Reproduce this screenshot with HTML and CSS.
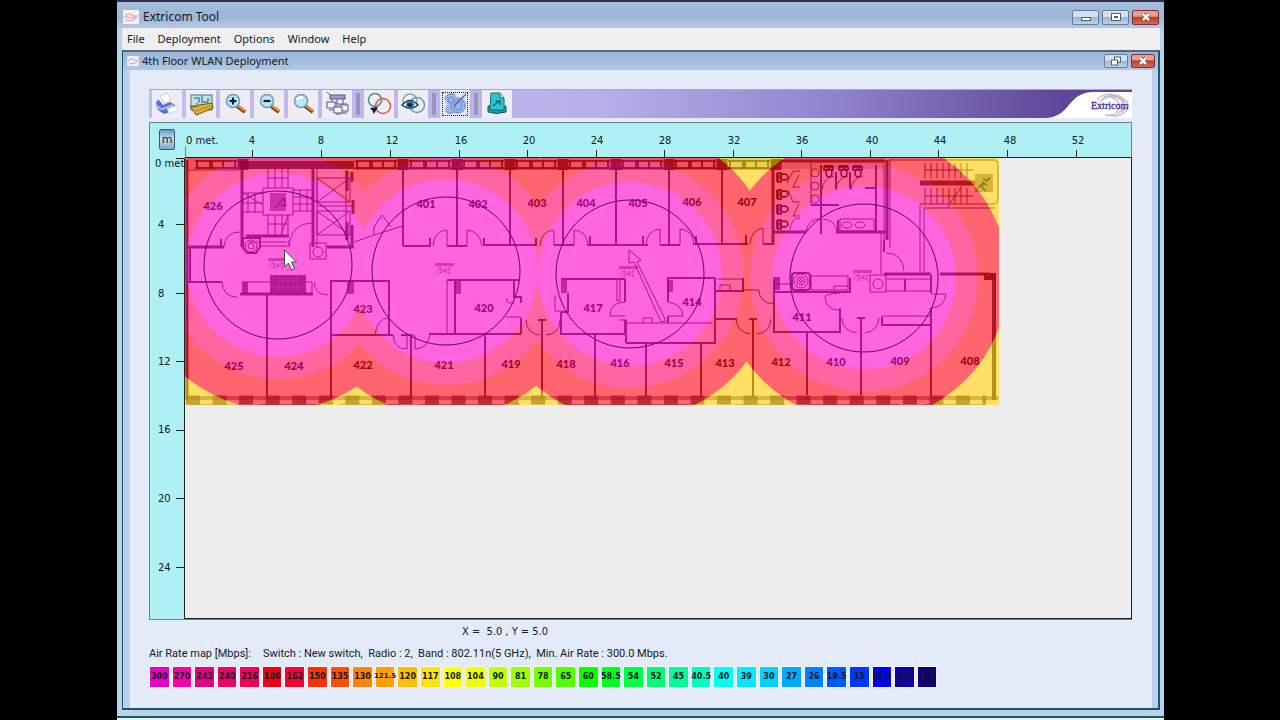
FILE: index.html
```html
<!DOCTYPE html>
<html lang="en">
<head>
<meta charset="utf-8">
<title>Extricom Tool</title>
<link rel="stylesheet" href="styles.css">
</head>
<body>
<div class="window">
  <header class="titlebar">
    <svg class="app-icon" width="16" height="14" viewBox="0 0 16 14"><rect width="16" height="14" fill="#f6f1f5"/><path d="M1 8q3-6 8-3t6 0M3 10q5 2 11-2M2 6q5 3 11 1" fill="none" stroke="#dfb4c0" stroke-width="1.5"/></svg>
    <h1 class="title">Extricom Tool</h1>
    <div class="controls">
      <button class="ctl" aria-label="Minimize"><svg width="12" height="10"><rect x="1.500" y="5.500" width="9" height="3" fill="#fff" stroke="#555f70"/></svg></button>
      <button class="ctl" aria-label="Maximize"><svg width="12" height="10"><rect x="1.500" y="1.500" width="9" height="7" fill="#fff" stroke="#555f70"/><rect x="4.500" y="4.500" width="3" height="1" fill="#9ab" stroke="#555f70"/></svg></button>
      <button class="ctl close" aria-label="Close"><svg width="12" height="10"><path d="M3 2l6 6M9 2l-6 6" stroke="#6d4048" stroke-width="4"/><path d="M3 2l6 6M9 2l-6 6" stroke="#fff" stroke-width="2.500"/></svg></button>
    </div>
  </header>
  <nav class="menubar">
    <button>File</button><button>Deployment</button><button>Options</button><button>Window</button><button>Help</button>
  </nav>
  <main class="child">
    <header class="childbar">
      <svg class="app-icon" width="12" height="10" viewBox="0 0 16 14"><rect width="16" height="14" fill="#eef0f6"/><path d="M1 8q3-6 8-3t6 0M3 10q5 2 11-2" fill="none" stroke="#cbb4c0" stroke-width="1.500"/></svg>
      <h2 class="title">4th Floor WLAN Deployment</h2>
      <div class="controls">
        <button class="ctl small" aria-label="Restore"><svg width="12" height="10"><rect x="4.500" y="1" width="6" height="5" fill="#fff" stroke="#555f70"/><rect x="1.500" y="4" width="6" height="5" fill="#fff" stroke="#555f70"/></svg></button>
        <button class="ctl small close" aria-label="Close"><svg width="12" height="10"><path d="M3 2l6 6M9 2l-6 6" stroke="#6d4048" stroke-width="4"/><path d="M3 2l6 6M9 2l-6 6" stroke="#fff" stroke-width="2.500"/></svg></button>
      </div>
    </header>
    <div class="panel">
      <div class="toolbar">
        <button class="tool" aria-label="Print"><svg width="26" height="26"><path d="M6 5l7-3 4 6-6 5z" fill="#fff" stroke="#c3cce8"/><path d="M2 13q0-4 3-4l4 5 7-3 5 3-2 6-9 3-6-4z" fill="#5a70d0"/><path d="M2 14q5 6 9 3l8-3" fill="none" stroke="#a9baf0" stroke-width="2"/><path d="M13 18l7-3 4 4-8 4z" fill="#fff" stroke="#c6cfee"/></svg></button>
        <button class="tool" aria-label="Floor plan"><svg width="26" height="26"><rect x="3" y="4" width="21" height="15" fill="#bce3e2" stroke="#447c92"/><path d="M6 7h5v5M14 4v7h6M9 12v5M17 14h6M20 7v4M4 15h4" fill="none" stroke="#4c899b" stroke-width="1.500"/><path d="M2 15l5 1 4-2 13-2 1 5-14 6-3 1z" fill="#dfad35" stroke="#6f571c"/><path d="M8 20l15-5" stroke="#7f621e" stroke-dasharray="1 1"/></svg></button>
        <button class="tool" aria-label="Zoom in"><svg width="26" height="26"><path d="M15 15l8 6" stroke="#803b21" stroke-width="4"/><path d="M15 14l8 6" stroke="#ed9b35" stroke-width="2"/><circle cx="11" cy="10" r="6.500" fill="#b8e9fa" stroke="#7b98ad" stroke-width="1.500"/><path d="M7.500 10h7M11 6.500v7" stroke="#111b30" stroke-width="2.200"/></svg></button>
        <button class="tool" aria-label="Zoom out"><svg width="26" height="26"><path d="M15 15l8 6" stroke="#803b21" stroke-width="4"/><path d="M15 14l8 6" stroke="#ed9b35" stroke-width="2"/><circle cx="11" cy="10" r="6.500" fill="#b8e9fa" stroke="#7b98ad" stroke-width="1.500"/><path d="M7.500 10h7" stroke="#111b30" stroke-width="2.200"/></svg></button>
        <button class="tool" aria-label="Zoom to fit"><svg width="26" height="26"><path d="M15 15l8 6" stroke="#803b21" stroke-width="4"/><path d="M15 14l8 6" stroke="#ed9b35" stroke-width="2"/><circle cx="11" cy="10" r="6.500" fill="#b8e9fa" stroke="#7b98ad" stroke-width="1.500"/><path d="M7 9q2-4 6-2" stroke="#fff" stroke-width="2" fill="none"/></svg></button>
        <button class="tool" aria-label="Network"><svg width="26" height="26" fill="#f4f2fa" stroke="#5d587c"><path d="M3 1l4 4"/><rect x="6" y="4" width="15" height="4" fill="#a496cf"/><path d="M8 8v4M13 8v9M19 8v5M4 12h9M13 13h10" fill="none"/><rect x="3" y="11" width="8" height="6"/><rect x="16" y="14" width="8" height="6"/><rect x="10" y="16" width="8" height="6"/><path d="M5 19h4M12 23h5M18 22h5" fill="none"/></svg></button>
        <span class="sep"></span>
        <button class="tool" aria-label="Select cells"><svg width="26" height="26" fill="none"><circle cx="9" cy="9" r="6.500" stroke="#4d9295" stroke-width="1.500"/><circle cx="17" cy="15" r="7.500" stroke="#ef514d" stroke-width="1.500"/><path d="M4 17l8-1-4 7-2-4z" fill="#111b4b"/></svg></button>
        <button class="tool" aria-label="Show cells"><svg width="26" height="26" fill="none"><circle cx="10" cy="10" r="7" stroke="#76afa6" stroke-width="1.500"/><circle cx="17" cy="14" r="7.500" stroke="#7199b2" stroke-width="1.500"/><path d="M2 14q8-9 16 0-8 7-16 0z" fill="#e7f2f6" stroke="#23445e" stroke-width="1.500"/><circle cx="10" cy="14" r="4" fill="#2f7196"/><circle cx="10" cy="14" r="2" fill="#071d32"/></svg></button>
        <span class="sep"></span>
        <button class="tool active" aria-label="Air rate map"><svg width="26" height="26"><circle cx="9" cy="8" r="6" fill="#9db6ea"/><circle cx="16" cy="14" r="8" fill="#9db6ea"/><circle cx="8" cy="18" r="5" fill="#9db6ea"/><g fill="none" stroke="#6a8acb"><circle cx="9" cy="9" r="3"/><circle cx="16" cy="15" r="4"/><circle cx="16" cy="15" r="7"/><path d="M3 8q2-6 10-5M4 20q3 4 8 1"/><path d="M12 15l12-12" stroke="#4d6bb0" stroke-width="1.500"/></g></svg></button>
        <span class="sep"></span>
        <button class="tool" aria-label="Export"><svg width="26" height="26"><path d="M4 15h18v6q-9 3-18 0z" fill="#1c9c9f" stroke="#175d66"/><path d="M7 2h9l4 5v12H6z" fill="#27c9cf" stroke="#126d78"/><path d="M16 2v5h4" fill="#aaf2ef" stroke="#126d78"/><path d="M9 15l6-5M12 10h4v4" fill="none" stroke="#116476" stroke-width="1.500"/></svg></button>
        <svg class="brand" width="140" height="29" viewBox="0 0 140 29"><path d="M52 29C80 29 74 3 102 3h38v26z" fill="#fff"/><g fill="none" stroke="#c2c1ca" stroke-width="1.500" transform="translate(4 0)"><path d="M101 11q7-9 22-4 15 8 6 16-7 6-18 3"/><path d="M104 13q8-10 20-3 8 7 1 14"/><path d="M108 8q13-5 21 6M109 26q10 1 17-5M106 10q9-5 16 3 4 6-2 10"/></g><text x="99" y="20" class="brand-name">Extricom</text></svg>
      </div>
      <section class="map">
        <div class="corner"><button class="unit">m</button></div>
        <svg class="ruler-x" aria-label="Horizontal ruler">
          <path d="M67.500 27v9M136.500 27v9M205.500 27v9M274.500 27v9M342.500 27v9M411.500 27v9M479.500 27v9M548.500 27v9M616.500 27v9M685.500 27v9M753.500 27v9M822.500 27v9M891.500 27v9M0 23v12" stroke="#222"/>
          <text x="1" y="21">0 met.</text>
          <g text-anchor="middle"><text x="67" y="21">4</text><text x="136" y="21">8</text><text x="207" y="21">12</text><text x="276" y="21">16</text><text x="344" y="21">20</text><text x="412" y="21">24</text><text x="480" y="21">28</text><text x="549" y="21">32</text><text x="617" y="21">36</text><text x="687" y="21">40</text><text x="755" y="21">44</text><text x="825" y="21">48</text><text x="893" y="21">52</text></g>
        </svg>
        <svg class="ruler-y" aria-label="Vertical ruler">
          <path d="M26 .5h9M26 66.500h9M26 135.500h9M26 203.500h9M26 272.500h9M26 340.500h9M26 409.500h9" stroke="#222"/>
          <text x="5" y="9">0 met</text><text x="8" y="70">4</text><text x="8" y="139">8</text><text x="8" y="207">12</text><text x="8" y="275">16</text><text x="8" y="344">20</text><text x="8" y="413">24</text>
        </svg>
        <div class="plot">
        <svg class="plan" aria-label="4th floor plan with air rate map">
          <defs>
            <clipPath id="sheet"><rect x="185" y="158" width="814" height="247"/></clipPath>
            <g id="ap" opacity=".7"><rect width="19" height="3" opacity=".6"/><path d="M2 4l14 7M17 4L3 11M6 4v7M10 4v7M14 4v7M0 11l6-7" fill="none" stroke="#000" opacity=".5"/></g>
            <g id="wc" fill="none" stroke="#000" stroke-width="1.500"><path d="M0-4v9M1-4h3v9H1z"/><ellipse cx="7" cy="0" rx="4" ry="3"/></g>
            <g id="win" fill="none" stroke="#000" stroke-width="1.500"><path d="M0 161h42M0 168h42M2 161v7M15 161v7M17 161v7M28 161v7M40 161v7"/><path d="M48 159v11" stroke-width="11" opacity=".8"/></g>
          </defs>
          <g transform="translate(-185 -158)"><g clip-path="url(#sheet)">
            <rect x="185" y="158" width="814" height="247" fill="#fff"/>
            <rect x="185" y="158" width="700" height="11" opacity=".18"/>
            <g fill="none" stroke="#1c1020" stroke-width="1" opacity=".85">
              <g stroke-width="3">
                <path d="M187 160v240M242 168v79M313 168v79M773 160v85M887 160v80M347 171v20M352 172v10M353 200v14M352 225v23M347 222v18"/>
                <path d="M187 247h37M327 247h27M240 294h73M884 274h47M940 274h50M774 232h32M836 232h52M246 236h43"/>
              </g>
              <path d="M994 275v125" stroke-width="4"/>
              <path d="M240 165h114" stroke-width="8"/><path d="M773 161h112" stroke-width="3"/><path d="M920 183h55" stroke-width="5"/>
              <g stroke-width="2">
                <path d="M187 282h35M267 294v103M331 281v117M330 281h60M389 281v54M331 335h62M401 335h12M411 335v62M429 334h92M485 335v61M542 320v77M538 320h8M521 318v16"/>
                <path d="M403 170v76M457 170v76M510 170v76M563 170v76M616 170v76M669 170v76M722 170v75"/>
                <path d="M403 246h28M447 246h20M484 245h53M554 245h20M587 245h61M660 245h20M693 244h55M763 244h11M430 238v8M484 238v8M536 238v8M590 236v8M643 236v8M696 236v8M746 235v8"/>
                <path d="M447 280h73M455 280v54M514 280v17h7v6M561 279h64M562 312h6v-19M561 312v22h64v-14M625 279v23M595 335v61M667 278h48M668 279v23M715 278v65h-89M626 320v23M646 343v53M701 343v53M668 316v7M715 291h28v-13M715 319h22M753 319v78M749 319h8"/>
                <path d="M774 280v52h66v-24M774 292h76v-14M807 332v63M861 318v77M857 318h8M931 308v88M882 317v8h48M931 275v18M821 165v69M876 165v67M884 240v12M811 205h28M838 220v12M865 188h12M836 172v17M850 172v17M905 279v12M190 247v35M221 239v8"/>
              </g>
              <path d="M187 170h51M354 169h420M187 397h812M190 399h808M190 405h50M260 405h60M340 405h60M420 405h100M560 405h130M735 405h50M810 405h90M925 405h60"/>
              <path d="M193 400h800" transform="translate(-7 0)" stroke-width="9" stroke-dasharray="14 12.550" opacity=".75"/>
              <path d="M447 280v54M242 282h70v12M310 243h16v16h-16zM317 178h33v24h-33zM317 178l33 24M350 178l-33 24M317 211h33v24h-33zM317 211l33 24M350 211l-33 24M317 169v78M317 206h37M346 170v70M263 188h30v27h-30zM268 169v19M275 169v19M282 169v19M288 169v19M268 215v20M275 215v20M282 215v20M288 215v20M268 178h20M268 224h20M243 193h20M243 203h20M243 212h20M248 193v20M255 193v20M293 190h20M293 197h20M293 204h20M293 211h20M300 190v21M307 190v21M243 193l20 12M288 215l-7 20"/>
              <path d="M224 247q1-15 16-15M222 282q1 15 15 15M289 247q2-24 24-24M314 282q1 13 14 13M354 242l20-7 0-8 8-12 9 12M374 235l29-9M375 335q2-17 14-17M393 335q1 14 14 14v-14M415 335v14q13 0 15-15M433 246q1-15 14-16v16M467 246v-16q13 1 15 16M540 246q1-15 14-16v16M574 245v-15q13 1 14 15M646 245q1-15 14-16v16M680 245v-16q13 1 14 16M750 244q1-14 13-16v16M526 320q1 14 14 15M546 335q14-1 14-15M506 317h15M625 302q-15 0-15 14h15M668 302q14 2 15 14h-15M736 319q1 13 14 15M757 334q13-1 14-15M743 290h16q0 13 15 14M806 232q2-13 14-13M823 219q13 1 14 13M840 293q-15 1-15 4 1 13 14 13M842 318q0 13 15 15M865 333q13-2 14-15M931 294h15q-1 13-15 14M886 253q17 0 18 18M514 303q-9 1-7-5"/>
              <path d="M620 279v22h-3v-22M626 323h87M619 320h8M643 323v-5h9v5M720 291v-6h10v6M717 279h25M555 295v16h8M811 276h37v14h-37zM834 290v-4h14M870 275h16v17h-16zM886 279h44M886 291h44M882 317v-1h48M773 284h17"/>
              <path d="M661 322L634 262l-5 1 0-13 12 10-4 2 29 59zM920 205v68M924 209v64M920 204h73q5 0 5-6V164q0-4-5-4H889M923 208h72M925 163v15M931 163v15M937 163v15M943 163v15M949 163v15M955 163v15M961 163v15M967 163v15M925 170h48M925 188v16M931 188v16M937 188v16M943 188v16M949 188v16M955 188v16M961 188v16M967 188v16M925 196h48M947 208l16-24M884 165v75M890 160v88M881 232v42"/>
              <path d="M800 171h-7l-6 12M800 187h-7l6-12M800 202h-7l-5-12M800 216h-7l6-12M790 230q1-12 10-12M811 163v42M822 190q1-12 12-14M836 190q1-12 12-14M851 190q1-12 12-14M840 219h34v12h-34z"/>
              <ellipse cx="847" cy="225" rx="5" ry="3"/><ellipse cx="860" cy="225" rx="5" ry="3"/>
              <circle cx="815" cy="173" r="4"/><circle cx="815" cy="186" r="4"/><circle cx="815" cy="199" r="4"/>
              <circle cx="318" cy="252" r="5"/><circle cx="878" cy="284" r="5"/>
              <rect x="792" y="273" width="18" height="17" rx="3" stroke-width="2"/><circle cx="801" cy="281" r="7"/><circle cx="801" cy="281" r="4"/><circle cx="801" cy="281" r="1.500"/>
              <path d="M243 238h17v9l-4 6h-9l-4-5z" stroke-width="2"/><circle cx="251" cy="246" r="6"/><circle cx="251" cy="246" r="3"/><path d="M260 246h29v-6M249 242h38"/>
            </g>
            <g fill="#2b2230">
              <rect x="270" y="193" width="16" height="18" opacity=".6"/><path d="M275 208l9-10 2 8-5-1" stroke="#000" fill="none"/><rect x="270" y="275" width="36" height="18" opacity=".85"/><path d="M270 281h36M270 287h36M279 275v18M288 275v18M297 275v18" stroke="#888" fill="none" opacity=".5"/>
              <rect x="242" y="282" width="6" height="12" opacity=".8"/><rect x="347" y="281" width="7" height="13" opacity=".7"/><rect x="455" y="281" width="6" height="13" opacity=".7"/><rect x="561" y="280" width="6" height="13" opacity=".7"/><rect x="667" y="280" width="6" height="12" opacity=".7"/><rect x="773" y="277" width="7" height="13" opacity=".8"/><rect x="975" y="174" width="18" height="18" opacity=".5"/><path d="M978 188l5-5 4 2M983 178l4 3 3-4M984 181l-2 6 4 4" stroke="#000" fill="none" stroke-width="1.500"/>
              <rect x="984" y="273" width="12" height="7"/>
            </g>
            <use href="#win" x="195"/><use href="#win" x="355"/><use href="#win" x="409"/><use href="#win" x="462"/><use href="#win" x="515"/><use href="#win" x="568"/><use href="#win" x="621"/><use href="#win" x="674"/><use href="#win" x="728"/>
            <use href="#wc" x="777" y="177"/><use href="#wc" x="777" y="194"/><use href="#wc" x="777" y="209"/><use href="#wc" x="777" y="224"/>
            <use href="#wc" transform="translate(829 166) rotate(90)"/><use href="#wc" transform="translate(844 166) rotate(90)"/><use href="#wc" transform="translate(858 166) rotate(90)"/>
            <use href="#ap" x="268" y="258"/><use href="#ap" x="435" y="263"/><use href="#ap" x="619" y="266"/><use href="#ap" x="853" y="270"/>
            <g class="rooms" text-anchor="middle">
              <text x="213" y="210">426</text><text x="426" y="208">401</text><text x="478" y="208">402</text><text x="537" y="207">403</text><text x="586" y="207">404</text><text x="638" y="207">405</text><text x="692" y="206">406</text><text x="747" y="206">407</text>
              <text x="363" y="313">423</text><text x="484" y="312">420</text><text x="593" y="312">417</text><text x="692" y="306">414</text><text x="802" y="321">411</text>
              <text x="234" y="370">425</text><text x="294" y="370">424</text><text x="363" y="369">422</text><text x="444" y="369">421</text><text x="511" y="368">419</text><text x="566" y="368">418</text><text x="620" y="367">416</text><text x="674" y="367">415</text><text x="725" y="367">413</text><text x="781" y="366">412</text><text x="836" y="366">410</text><text x="900" y="365">409</text><text x="970" y="365">408</text>
            </g>
            <g opacity=".6">
              <rect x="185" y="158" width="814" height="247" fill="#ffcc00"/>
              <g fill="#ff0010"><circle cx="278" cy="265" r="145"/><circle cx="446" cy="271" r="146"/><circle cx="630" cy="274" r="146"/><circle cx="864" cy="278" r="144"/></g>
              <g fill="#ff0062"><circle cx="278" cy="265" r="114"/><circle cx="446" cy="271" r="114"/><circle cx="630" cy="274" r="114"/><circle cx="864" cy="278" r="114"/></g>
              <g fill="#ff00c8"><circle cx="278" cy="265" r="92"/><circle cx="446" cy="271" r="92"/><circle cx="630" cy="274" r="92"/><circle cx="864" cy="278" r="92"/></g>
            </g>
            <g fill="none" stroke="#5a0a6a"><circle cx="278" cy="265" r="74"/><circle cx="446" cy="271" r="74"/><circle cx="630" cy="274" r="74"/><circle cx="864" cy="278" r="74"/></g>
          </g>
          <path d="M284.500 250v17l4-4 3 7 3-1-3-7h5z" fill="#fff" stroke="#444"/></g>
        </svg>
        </div>
      </section>
      <p class="coords">X =&nbsp; 5.0 , Y = 5.0</p>
      <p class="status"><span>Air Rate map [Mbps]:</span><span>Switch : New switch,&nbsp; Radio : 2,&nbsp; Band : 802.11n(5 GHz),&nbsp; Min. Air Rate : 300.0 Mbps.</span></p>
      <ul class="legend">
        <li style="background:#e600c8">300</li><li style="background:#fa00a5">270</li><li style="background:#eb0082">243</li><li style="background:#f00064">240</li><li style="background:#f50055">216</li><li style="background:#f50010">180</li><li style="background:#fa0037">162</li><li style="background:#fa3205">150</li><li style="background:#fa5000">135</li><li style="background:#ff820a">130</li><li class="long" style="background:#ffa000">121.5</li><li style="background:#ffbe00">120</li><li style="background:#ffe600">117</li><li style="background:#ffff00">108</li><li style="background:#f0ff00">104</li><li style="background:#c3ff00">90</li><li style="background:#a0ff00">81</li><li style="background:#78ff00">78</li><li style="background:#50ff00">65</li><li style="background:#0aff00">60</li><li style="background:#00ff1e">58.5</li><li style="background:#00ff46">54</li><li style="background:#00ff6e">52</li><li style="background:#00ff96">45</li><li style="background:#00ffbe">40.5</li><li style="background:#00fff0">40</li><li style="background:#00ebff">39</li><li style="background:#00d2ff">30</li><li style="background:#00aaff">27</li><li style="background:#0082ff">26</li><li style="background:#005aff">19.5</li><li style="background:#0037ff">15</li><li style="background:#0000fa">13.5</li><li style="background:#0f00a0">13</li><li style="background:#140073">6.5</li>
      </ul>
    </div>
  </main>
</div>
</body>
</html>
```

FILE: styles.css
```css
* { box-sizing: border-box; }
body {
  margin: 0;
  min-height: 100vh;
  padding: 0 116px 0 117px;
  background: #000;
  font-family: "Noto Sans", "Open Sans", sans-serif;
  font-size: 11px;
  color: #111a28;
  display: flex;
}
button { font: inherit; color: inherit; border: 0; padding: 0; background: none; }
h1, h2, p, ul { margin: 0; padding: 0; font-size: inherit; font-weight: normal; }
svg { display: block; }

.window {
  flex: 1;
  min-width: 0;
  display: flex;
  flex-direction: column;
  padding: 0 4px 6px 5px;
  background: #b9d1ea;
  border-top: 2px solid #382f45;
  border-bottom: 2px solid #1d5568;
  margin-bottom: 2px;
  box-shadow: 0 2px #e8f3f8;
}
.titlebar {
  display: flex;
  align-items: center;
  height: 26px;
  gap: 4px;
  background: linear-gradient(#a3bede, #9db6d8 60%, #b4c9e4);
  margin: 0 -4px 0 -5px;
  padding: 4px 5px 0 6px;
}
.title { flex: 1; line-height: 18px; }
.titlebar .title { font-size: 12px; }
.controls { display: flex; gap: 3px; }
.ctl {
  width: 27px;
  height: 15px;
  display: grid;
  place-items: center;
  border: 1px solid #667f9e;
  border-radius: 2px;
  background: linear-gradient(#d3e0f0 45%, #9fb5d1 50%, #bdd2ea);
}
.ctl.small { width: 24px; height: 14px; }
.ctl.close { border-color: #7a3436; background: linear-gradient(#e6a090 40%, #c23a28 50%, #d86a50); }
.menubar {
  height: 22px;
  display: flex;
  gap: 13px;
  padding: 0 5px;
  background: #efefef;
  line-height: 20px;
}
.child {
  flex: 1;
  display: flex;
  flex-direction: column;
  border: solid #1d5568;
  border-width: 2px 2px 2px 1px;
  border-top-color: #55677d;
  background: #b9d1ea;
  padding: 0 6px 0 7px;
}
.childbar {
  height: 18px;
  margin: 0 -6px 0 -7px;
  padding: 0 3px 0 4px;
  display: flex;
  align-items: center;
  gap: 3px;
  background: linear-gradient(#9ab4d6, #b0c7e4);
}
.panel {
  flex: 1;
  display: flex;
  flex-direction: column;
  background: #e3ebf9;
  padding: 19px 20px 20px 19px;
}
.toolbar {
  height: 29px;
  display: flex;
  align-items: flex-start;
  gap: 4px;
  padding-left: 3px;
  background: linear-gradient(90deg, #c3bef1, #b8b1e9 45%, #8f82ce 70%, #5f4698 93%);
  border-top: 1px solid #aaa2dc;
}
.tool {
  width: 30px;
  height: 28px;
  background: #efedf2;
  display: grid;
  place-items: center;
}
.tool.active { outline: 1px dotted #222; outline-offset: -3px; background: #e6e6f0; }
.sep { width: 4px; height: 22px; margin-top: 3px; background: #9a94b8; }
.brand { margin-left: auto; margin-top: -1px; }
.brand-name { font: 10px "Liberation Serif", serif; fill: #3d2c90; stroke: #3d2c90; stroke-width: .3px; }
.map {
  flex: 1;
  min-height: 300px;
  margin-top: 4px;
  display: grid;
  grid-template-columns: 35px minmax(0, 1fr);
  grid-template-rows: 35px minmax(0, 1fr);
  border: solid #6c838d;
  border-width: 1px 0 1px 1px;
  background: #aef0f4;
}
.corner { padding: 6px 0 0 9px; }
.unit {
  width: 16px;
  height: 21px;
  border: 1px solid #3d5876;
  border-radius: 2px;
  background: linear-gradient(#6e97c0, #c4e0f2 45%, #7ea9cf);
  font: 11px "DejaVu Sans", sans-serif;
}
.ruler-x, .ruler-y { width: 100%; height: 100%; font: 10px "DejaVu Sans", sans-serif; fill: #101820; }
.ruler-x { border-bottom: 1px solid #222; border-right: 1px solid #6c838d; }
.plot {
  background: #eee;
  border: solid #1c1c28;
  border-width: 0 1px 1px 0;
  overflow: hidden;
  box-shadow: -1px 0 #222;
}
.plan { width: 100%; height: 100%; }
.rooms { font: 900 11px Lato, sans-serif; fill: #100812; }
.coords { padding-left: 313px; margin-top: 3px; font: 11px/18px "DejaVu Sans Condensed", "Noto Sans", sans-serif; }
.status { display: flex; gap: 12px; margin-top: 4px; font: 11px/18px Roboto, sans-serif; }
.legend {
  display: flex;
  gap: 2px;
  list-style: none;
  margin-top: 3px;
  max-width: 788px;
}
.legend li {
  flex: 1 1 0;
  min-width: 0;
  height: 22px;
  border: 1px solid #f2f4fc;
  font: 700 8px/19px "DejaVu Sans", sans-serif;
  text-align: center;
  display: flex;
  justify-content: center;
}
.legend .long { font-size: 7px; }
```
